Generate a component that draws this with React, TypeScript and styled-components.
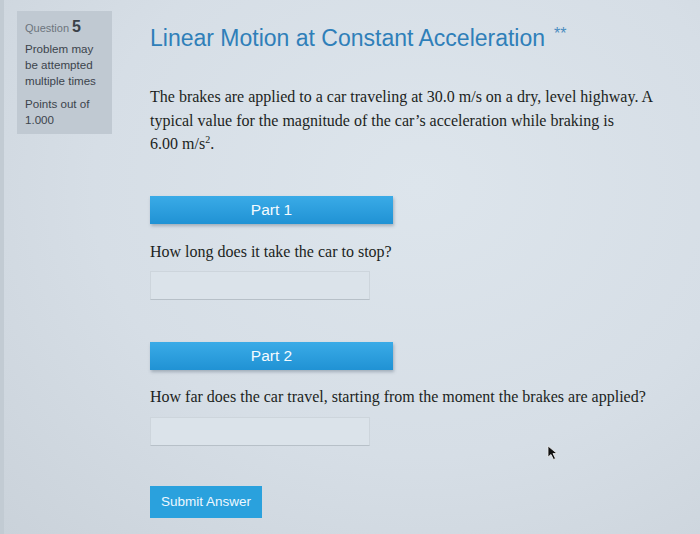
import React from "react";
import styled, { createGlobalStyle } from "styled-components";

const Global = createGlobalStyle`
  html, body { margin: 0; padding: 0; }
  body {
    width: 700px; height: 534px; overflow: hidden;
    background: radial-gradient(ellipse at 60% 35%, #dde5ec 0%, #d6dee6 55%, #cad2da 100%);
  }
`;

const Page = styled.div`
  display: flex;
  width: 700px;
  height: 534px;
  box-sizing: border-box;
  border-left: 4px solid #c2cbd3;
`;

const SideCol = styled.div`
  width: 128px;
  flex: none;
  padding: 11px 0 0 13px;
  box-sizing: border-box;
`;

const SideBox = styled.div`
  width: 95px;
  height: 123px;
  box-sizing: border-box;
  background: #c0c9d2;
  padding: 7px 0 0 8px;
  font-family: "Liberation Sans", Arial, sans-serif;
  color: #3c444c;
`;

const QLabel = styled.div`
  font-size: 11px;
  color: #6d757d;
  line-height: 18px;
  b { font-size: 16px; color: #3a4148; font-weight: bold; }
`;

const SideText = styled.div<{ $gap?: number }>`
  font-size: 11.6px;
  line-height: 16px;
  margin-top: ${(p) => p.$gap ?? 0}px;
  white-space: nowrap;
`;

const Main = styled.div`
  flex: 1;
  padding: 22px 0 0 18px;
  display: flex;
  flex-direction: column;
`;

const Title = styled.h1`
  margin: 0;
  font-family: "Liberation Sans", Arial, sans-serif;
  font-weight: normal;
  font-size: 23px;
  line-height: 32px;
  color: #2f7fb9;
  white-space: nowrap;
`;

const Stars = styled.span`
  font-size: 16px;
  color: #4a8cc0;
  vertical-align: top;
  margin-left: 9px;
  position: relative;
  top: -4px;
`;

const Body = styled.p<{ $mt: number }>`
  margin: ${(p) => p.$mt}px 0 0 0;
  font-family: "Liberation Serif", "Times New Roman", serif;
  font-size: 16px;
  line-height: 23.5px;
  color: #1c1f22;
  white-space: nowrap;
  sup { font-size: 10px; line-height: 0; }
`;

const PartBar = styled.div<{ $mt: number }>`
  margin-top: ${(p) => p.$mt}px;
  width: 243px;
  height: 28px;
  background: linear-gradient(#3aabe7, #2092d4);
  box-shadow: 1px 2px 3px rgba(60, 80, 100, 0.35);
  display: flex;
  align-items: center;
  justify-content: center;
  font-family: "Liberation Sans", Arial, sans-serif;
  font-size: 15.5px;
  color: #f4fbff;
`;

const Input = styled.div`
  margin-top: 8px;
  width: 220px;
  height: 29px;
  box-sizing: border-box;
  background: #dbe3ea;
  border: 1px solid #cdd5dc;
  border-bottom-color: #b7c0c8;
`;

const Submit = styled.button`
  margin-top: 40px;
  width: 112px;
  height: 32px;
  border: none;
  background: #2aa1dd;
  color: #eef8ff;
  font-family: "Liberation Sans", Arial, sans-serif;
  font-size: 13.5px;
  padding: 0;
  align-self: flex-start;
`;

const CursorWrap = styled.div`
  position: absolute;
  left: 547px;
  top: 445px;
`;

export default function App() {
  return (
    <>
      <Global />
      <Page>
        <SideCol>
          <SideBox>
            <QLabel>
              Question <b>5</b>
            </QLabel>
            <SideText $gap={4}>
              Problem may
              <br />
              be attempted
              <br />
              multiple times
            </SideText>
            <SideText $gap={7}>
              Points out of
              <br />
              1.000
            </SideText>
          </SideBox>
        </SideCol>
        <Main>
          <Title>
            Linear Motion at Constant Acceleration<Stars>**</Stars>
          </Title>
          <Body $mt={31}>
            The brakes are applied to a car traveling at 30.0 m/s on a dry, level highway. A
            <br />
            typical value for the magnitude of the car’s acceleration while braking is
            <br />
            6.00 m/s<sup>2</sup>.
          </Body>
          <PartBar $mt={40}>Part 1</PartBar>
          <Body $mt={16}>How long does it take the car to stop?</Body>
          <Input />
          <PartBar $mt={42}>Part 2</PartBar>
          <Body $mt={15}>How far does the car travel, starting from the moment the brakes are applied?</Body>
          <Input />
          <Submit>Submit Answer</Submit>
        </Main>
      </Page>
      <CursorWrap>
        <svg width="12" height="16" viewBox="0 0 12 16">
          <path d="M1 1 L1 12 L4 9.5 L6.5 14.5 L8.5 13.5 L6 8.5 L10 8.5 Z" fill="#111" stroke="#eee" strokeWidth="0.8" />
        </svg>
      </CursorWrap>
    </>
  );
}
